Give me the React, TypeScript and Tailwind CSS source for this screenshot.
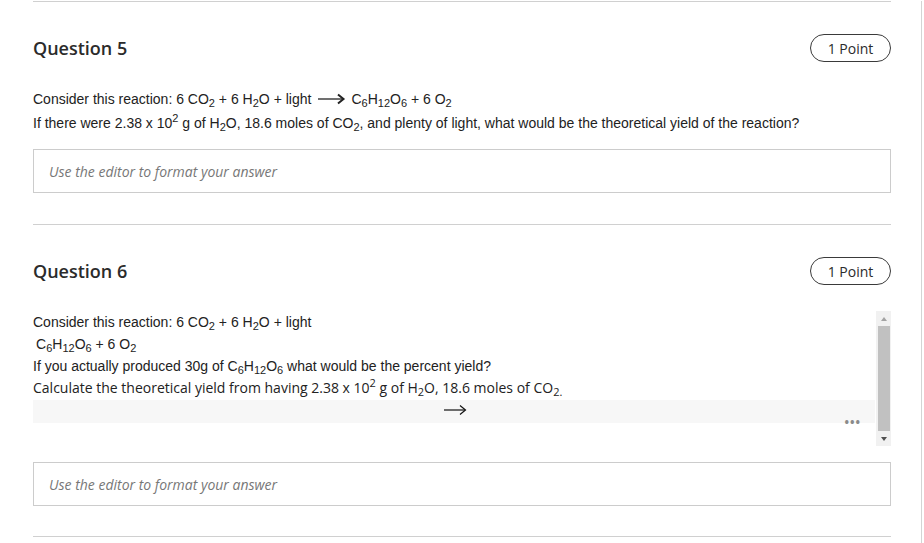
import React from 'react'

const arial = { fontFamily: '"Liberation Sans", Arial, sans-serif' }

function PointBadge() {
  return (
    <div className="flex h-[28px] w-[81px] items-center justify-center rounded-full border border-[#3a3a3a] text-[14px] font-medium text-[#2b2b2b] [font-family:'Open_Sans',sans-serif]">
      1 Point
    </div>
  )
}

function QuestionHeader({ title }: { title: string }) {
  return (
    <div className="flex h-[28px] items-center justify-between">
      <h2 className="text-[18px] font-semibold text-[#2b2b2b] [font-family:'Open_Sans',sans-serif]">{title}</h2>
      <PointBadge />
    </div>
  )
}

function AnswerBox() {
  return (
    <div className="flex h-[44px] items-center border border-[#cccccc] pl-[15px] text-[14px] italic text-[#777777] [font-family:'Open_Sans',sans-serif]">
      Use the editor to format your answer
    </div>
  )
}

function Sub({ children }: { children: React.ReactNode }) {
  return <span className="text-[11px] leading-none [vertical-align:-3px]">{children}</span>
}

function Sup({ children }: { children: React.ReactNode }) {
  return <span className="text-[11px] leading-none [vertical-align:6px]">{children}</span>
}

function LongArrow() {
  return (
    <svg width="28" height="12" viewBox="0 0 28 12" className="ml-[7px] mr-[5px] inline-block align-[-1px]">
      <line x1="0" y1="6" x2="25" y2="6" stroke="#222" strokeWidth="1.3" />
      <polyline points="20,1.5 25.5,6 20,10.5" fill="none" stroke="#222" strokeWidth="2" />
    </svg>
  )
}

export default function App() {
  return (
    <div className="min-h-[543px] w-[922px] border-r border-[#d4d4d4] bg-white">
      <div className="pl-[33px] pr-[30px]">
        <div className="mt-px border-t border-[#d0d0d0]" />

        {/* Question 5 */}
        <div className="mt-[32px]">
          <QuestionHeader title="Question 5" />
        </div>
        <div className="mt-[25px] text-[14px] leading-[24px] text-[#222222]" style={arial}>
          <p>
            Consider this reaction: 6 CO<Sub>2</Sub> + 6 H<Sub>2</Sub>O + light
            <LongArrow />
            C<Sub>6</Sub>H<Sub>12</Sub>O<Sub>6</Sub> + 6 O<Sub>2</Sub>
          </p>
          <p>
            If there were 2.38 x 10<Sup>2</Sup> g of H<Sub>2</Sub>O, 18.6 moles of CO<Sub>2</Sub>, and plenty of
            light, what would be the theoretical yield of the reaction?
          </p>
        </div>
        <div className="mt-[14px]">
          <AnswerBox />
        </div>
        <div className="mt-[31px] border-t border-[#d0d0d0]" />

        {/* Question 6 */}
        <div className="mt-[32px]">
          <QuestionHeader title="Question 6" />
        </div>
        <div className="relative mt-[26px] flex h-[135px]">
          <div className="flex-1 pr-[1px] text-[14px] leading-[22px] text-[#222222]">
            <div style={arial}>
              <p>
                Consider this reaction: 6 CO<Sub>2</Sub> + 6 H<Sub>2</Sub>O + light
              </p>
              <p className="pl-[3px]">
                C<Sub>6</Sub>H<Sub>12</Sub>O<Sub>6</Sub> + 6 O<Sub>2</Sub>
              </p>
              <p>
                If you actually produced 30g of C<Sub>6</Sub>H<Sub>12</Sub>O<Sub>6</Sub> what would be the percent yield?
              </p>
            </div>
            <p className="[font-family:'Open_Sans',sans-serif]">
              Calculate the theoretical yield from having 2.38 x 10<Sup>2</Sup> g of H<Sub>2</Sub>O, 18.6 moles of CO
              <Sub>2.</Sub>
            </p>
            <div className="mt-[1px] flex h-[23px] justify-center bg-[#f7f7f7] pl-[2px] pt-[4px]">
              <svg width="24" height="12" viewBox="0 0 24 12">
                <line x1="1" y1="6" x2="22" y2="6" stroke="#111" strokeWidth="1.2" />
                <polyline points="17,1.5 22.5,6 17,10.5" fill="none" stroke="#111" strokeWidth="1.2" />
              </svg>
            </div>
          </div>
          <span className="absolute right-[30px] top-[103px] text-[12px] font-bold tracking-[1px] text-[#8a8a8a]">•••</span>
          <div className="flex w-[15px] flex-col items-center bg-[#f1f1f1]">
            <div className="flex h-[15px] items-center justify-center">
              <div className="h-0 w-0 border-x-[3.5px] border-b-[4px] border-x-transparent border-b-[#a3a3a3]" />
            </div>
            <div className="w-[12px] flex-1 bg-[#c1c1c1]" />
            <div className="flex h-[15px] items-center justify-center">
              <div className="h-0 w-0 border-x-[3.5px] border-t-[4px] border-x-transparent border-t-[#505050]" />
            </div>
          </div>
        </div>
        <div className="mt-[16px]">
          <AnswerBox />
        </div>
        <div className="mt-[30px] border-t border-[#d0d0d0]" />
      </div>
    </div>
  )
}
